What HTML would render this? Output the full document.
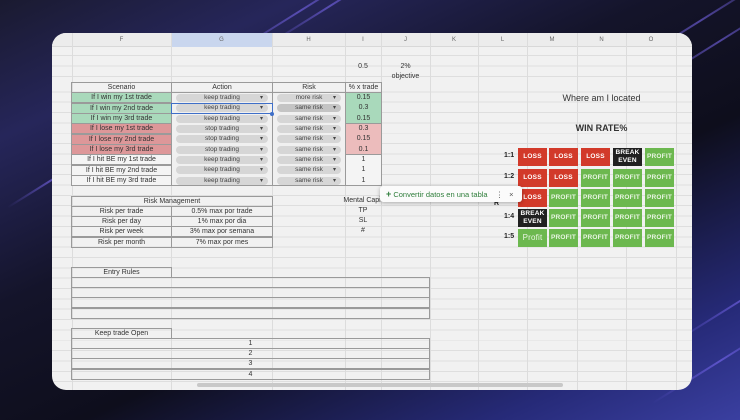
<!DOCTYPE html>
<html><head><meta charset="utf-8"><style>
*{margin:0;padding:0;box-sizing:border-box}
body{width:740px;height:420px;overflow:hidden;position:relative;font-family:"Liberation Sans",sans-serif;
background:linear-gradient(155deg,#1a1a30 0%,#26265a 18%,#14142a 40%,#0e0e1c 60%,#262a78 85%,#3a3fa0 100%);}
.st{position:absolute;background:linear-gradient(90deg,transparent,rgba(130,110,255,.55),transparent);height:2px;transform:rotate(-32deg)}
#scr{position:absolute;left:52px;top:33px;width:640px;height:357px;background:#f1f1f1;border-radius:14px;overflow:hidden;
background-image:repeating-linear-gradient(180deg,transparent 0,transparent 9.35px,#dedede 9.35px,#dedede 10.35px);background-position:0 49px}
.a{position:absolute}
.t{position:absolute;font-size:7px;color:#333;text-align:center;line-height:10px;white-space:nowrap}
.vl{position:absolute;top:0;width:1px;height:357px;background:#dcdcdc}
.hd{position:absolute;top:0;height:14px;font-size:6px;color:#666;text-align:center;line-height:14px}
.c{position:absolute;border:1px solid #9a9a9a;font-size:7px;color:#333;text-align:center;line-height:9px;white-space:nowrap;overflow:hidden}
.pill{position:absolute;height:8px;background:#d6d6d6;border-radius:4px;font-size:6.5px;color:#444;text-align:center;line-height:8px}
.pill:after{content:"▾";position:absolute;right:5px;top:0;font-size:6px}
.w{position:absolute;width:29px;height:18px;color:#fff;font-size:6.5px;text-align:center;line-height:18px;font-weight:bold;letter-spacing:.2px}
.L{background:#d23a2a}.P{background:#6cb84f;color:#e9f5e3}.B{background:#202020;line-height:8px;padding-top:1px}
.pc{position:absolute;top:137px;width:29px;font-size:7.5px;font-weight:bold;text-align:center;color:#222}
.rl{position:absolute;left:500px;font-size:7px;font-weight:bold;color:#222}
</style></head><body>
<div class="st" style="left:200px;top:10px;width:200px"></div>
<div class="st" style="left:250px;top:5px;width:160px"></div>
<div class="st" style="left:600px;top:20px;width:200px"></div>
<div class="st" style="left:620px;top:40px;width:200px"></div>
<div class="st" style="left:660px;top:300px;width:160px"></div>
<div class="st" style="left:640px;top:360px;width:160px"></div>
<div class="st" style="left:0px;top:180px;width:100px"></div>
<div id="scr">
<div class="a" style="left:0;top:0;width:640px;height:14px;background:#ececec;border-bottom:1px solid #d8d8d8"></div>
<div class="a" style="left:119px;top:0;width:101px;height:14px;background:#c9d6ee"></div>
<div class="vl" style="left:20px"></div><div class="vl" style="left:119px"></div><div class="vl" style="left:220px"></div><div class="vl" style="left:293px"></div><div class="vl" style="left:329px"></div><div class="vl" style="left:378px"></div><div class="vl" style="left:426px"></div><div class="vl" style="left:475px"></div><div class="vl" style="left:525px"></div><div class="vl" style="left:574px"></div><div class="vl" style="left:624px"></div>
<div class="hd" style="left:20px;width:99px">F</div><div class="hd" style="left:119px;width:101px">G</div><div class="hd" style="left:220px;width:73px">H</div><div class="hd" style="left:293px;width:36px">I</div><div class="hd" style="left:329px;width:49px">J</div><div class="hd" style="left:378px;width:48px">K</div><div class="hd" style="left:426px;width:49px">L</div><div class="hd" style="left:475px;width:50px">M</div><div class="hd" style="left:525px;width:49px">N</div><div class="hd" style="left:574px;width:50px">O</div>
<div class="t" style="left:293px;top:29px;width:36px">0.5</div>
<div class="t" style="left:329px;top:29px;width:49px">2%</div>
<div class="t" style="left:329px;top:39px;width:49px">objective</div>
<div class="c" style="left:19px;top:49px;width:101px;height:11px">Scenario</div>
<div class="c" style="left:119px;top:49px;width:102px;height:11px">Action</div>
<div class="c" style="left:220px;top:49px;width:74px;height:11px">Risk</div>
<div class="c" style="left:293px;top:49px;width:37px;height:11px">% x trade</div>
<div class="c" style="left:19px;top:59px;width:101px;height:11px;background:#a9d9bb">If I win my 1st trade</div>
<div class="c" style="left:19px;top:69.5px;width:101px;height:11px;background:#a9d9bb">If I win my 2nd trade</div>
<div class="c" style="left:19px;top:80px;width:101px;height:11px;background:#a9d9bb">If I win my 3rd trade</div>
<div class="c" style="left:19px;top:90px;width:101px;height:11px;background:#dd9799">If I lose my 1st trade</div>
<div class="c" style="left:19px;top:100.5px;width:101px;height:11px;background:#dd9799">If I lose my 2nd trade</div>
<div class="c" style="left:19px;top:111px;width:101px;height:11px;background:#dd9799">If I lose my 3rd trade</div>
<div class="c" style="left:19px;top:121px;width:101px;height:11px;background:#f4f4f4">If I hit BE my 1st trade</div>
<div class="c" style="left:19px;top:131.5px;width:101px;height:11px;background:#f4f4f4">If I hit BE my 2nd trade</div>
<div class="c" style="left:19px;top:142px;width:101px;height:11px;background:#f4f4f4">If I hit BE my 3rd trade</div>
<div class="c" style="left:119px;top:59px;width:102px;height:94px;background:#f0f0f0"></div>
<div class="c" style="left:220px;top:59px;width:74px;height:94px;background:#f0f0f0"></div>
<div class="c" style="left:293px;top:59px;width:37px;height:32px;background:#a9d9bb"></div>
<div class="c" style="left:293px;top:90px;width:37px;height:32px;background:#ecbcbc"></div>
<div class="c" style="left:293px;top:121px;width:37px;height:32px;background:#f4f4f4"></div>
<div class="a" style="left:119px;top:69.5px;width:102px;height:11px;border:1.5px solid #3f6fc8"></div>
<div class="a" style="left:218px;top:79px;width:4px;height:4px;border-radius:2px;background:#3f6fc8"></div>
<div class="pill" style="left:124px;top:60.5px;width:92px">keep trading</div>
<div class="pill" style="left:124px;top:71px;width:92px">keep trading</div>
<div class="pill" style="left:124px;top:81.5px;width:92px">keep trading</div>
<div class="pill" style="left:124px;top:91.5px;width:92px">stop trading</div>
<div class="pill" style="left:124px;top:102px;width:92px">stop trading</div>
<div class="pill" style="left:124px;top:112.5px;width:92px">stop trading</div>
<div class="pill" style="left:124px;top:122.5px;width:92px">keep trading</div>
<div class="pill" style="left:124px;top:133px;width:92px">keep trading</div>
<div class="pill" style="left:124px;top:143.5px;width:92px">keep trading</div>
<div class="pill" style="left:225px;top:60.5px;width:64px">more risk</div>
<div class="pill" style="left:225px;top:71px;width:64px;background:#c4c4c4">same risk</div>
<div class="pill" style="left:225px;top:81.5px;width:64px">same risk</div>
<div class="pill" style="left:225px;top:91.5px;width:64px">same risk</div>
<div class="pill" style="left:225px;top:102px;width:64px">same risk</div>
<div class="pill" style="left:225px;top:112.5px;width:64px">same risk</div>
<div class="pill" style="left:225px;top:122.5px;width:64px">same risk</div>
<div class="pill" style="left:225px;top:133px;width:64px">same risk</div>
<div class="pill" style="left:225px;top:143.5px;width:64px">same risk</div>
<div class="t" style="left:293px;top:59.5px;width:37px">0.15</div>
<div class="t" style="left:293px;top:70px;width:37px">0.3</div>
<div class="t" style="left:293px;top:80.5px;width:37px">0.15</div>
<div class="t" style="left:293px;top:90.5px;width:37px">0.3</div>
<div class="t" style="left:293px;top:101px;width:37px">0.15</div>
<div class="t" style="left:293px;top:111.5px;width:37px">0.1</div>
<div class="t" style="left:293px;top:121.5px;width:37px">1</div>
<div class="t" style="left:293px;top:132px;width:37px">1</div>
<div class="t" style="left:293px;top:142.5px;width:37px">1</div>
<div class="c" style="left:19px;top:163px;width:202px;height:11px">Risk Management</div>
<div class="c" style="left:19px;top:173px;width:101px;height:11px">Risk per trade</div><div class="c" style="left:119px;top:173px;width:102px;height:11px">0.5% max por trade</div>
<div class="c" style="left:19px;top:183px;width:101px;height:11px">Risk per day</div><div class="c" style="left:119px;top:183px;width:102px;height:11px">1% max por dia</div>
<div class="c" style="left:19px;top:193px;width:101px;height:11px">Risk per week</div><div class="c" style="left:119px;top:193px;width:102px;height:11px">3% max por semana</div>
<div class="c" style="left:19px;top:203.5px;width:101px;height:11px">Risk per month</div><div class="c" style="left:119px;top:203.5px;width:102px;height:11px">7% max por mes</div>
<div class="t" style="left:283px;top:163px;width:60px">Mental Capita</div>
<div class="t" style="left:293px;top:173px;width:36px">TP</div>
<div class="t" style="left:293px;top:183px;width:36px">SL</div>
<div class="t" style="left:293px;top:193px;width:36px">#</div>
<div class="c" style="left:19px;top:234px;width:101px;height:11px">Entry Rules</div>
<div class="c" style="left:19px;top:244px;width:359px;height:11px"></div>
<div class="c" style="left:19px;top:254px;width:359px;height:11px"></div>
<div class="c" style="left:19px;top:264px;width:359px;height:11px"></div>
<div class="c" style="left:19px;top:274.5px;width:359px;height:11px"></div>
<div class="c" style="left:19px;top:295px;width:101px;height:11px">Keep trade Open</div>
<div class="c" style="left:19px;top:305px;width:359px;height:11px">1</div>
<div class="c" style="left:19px;top:315px;width:359px;height:11px">2</div>
<div class="c" style="left:19px;top:325px;width:359px;height:11px">3</div>
<div class="c" style="left:19px;top:335.5px;width:359px;height:11px">4</div>
<div class="a" style="left:145px;top:350px;width:366px;height:4px;border-radius:2px;background:#c8c8c8"></div>
<div class="t" style="left:475px;top:60px;width:149px;font-size:9px;color:#333">Where am I located</div>
<div class="t" style="left:475px;top:90px;width:149px;font-size:9px;font-weight:bold;color:#333">WIN RATE%</div>
<div class="pc" style="left:466px">20%</div><div class="pc" style="left:497px">30%</div><div class="pc" style="left:529px">40%</div><div class="pc" style="left:561px">50%</div><div class="pc" style="left:593px">60%</div>
<div class="rl" style="left:452px;top:119px">1:1</div><div class="rl" style="left:452px;top:140px">1:2</div><div class="rl" style="left:452px;top:180px">1:4</div><div class="rl" style="left:452px;top:200px">1:5</div>
<div class="w L" style="left:466px;top:115px">LOSS</div><div class="w L" style="left:497px;top:115px">LOSS</div><div class="w L" style="left:529px;top:115px">LOSS</div><div class="w B" style="left:561px;top:115px">BREAK<br>EVEN</div><div class="w P" style="left:593px;top:115px">PROFIT</div>
<div class="w L" style="left:466px;top:136px">LOSS</div><div class="w L" style="left:497px;top:136px">LOSS</div><div class="w P" style="left:529px;top:136px">PROFIT</div><div class="w P" style="left:561px;top:136px">PROFIT</div><div class="w P" style="left:593px;top:136px">PROFIT</div>
<div class="w L" style="left:466px;top:156px">LOSS</div><div class="w P" style="left:497px;top:156px">PROFIT</div><div class="w P" style="left:529px;top:156px">PROFIT</div><div class="w P" style="left:561px;top:156px">PROFIT</div><div class="w P" style="left:593px;top:156px">PROFIT</div>
<div class="w B" style="left:466px;top:176px">BREAK<br>EVEN</div><div class="w P" style="left:497px;top:176px">PROFIT</div><div class="w P" style="left:529px;top:176px">PROFIT</div><div class="w P" style="left:561px;top:176px">PROFIT</div><div class="w P" style="left:593px;top:176px">PROFIT</div>
<div class="w P" style="left:466px;top:196px;font-size:8px;font-weight:normal">Profit</div><div class="w P" style="left:497px;top:196px">PROFIT</div><div class="w P" style="left:529px;top:196px">PROFIT</div><div class="w P" style="left:561px;top:196px">PROFIT</div><div class="w P" style="left:593px;top:196px">PROFIT</div>
<div class="rl" style="left:442px;top:167px;font-size:7px">R</div>
<div class="a" style="left:328px;top:153px;width:142px;height:16px;background:#fbfbfb;border-radius:3px;box-shadow:0 1px 4px rgba(0,0,0,.3);font-size:7.5px;color:#2e7d3a;line-height:16px;padding-left:6px;white-space:nowrap">
<b style="font-size:9px">+</b> Convertir datos en una tabla <span style="color:#555;margin-left:6px">⋮</span><span style="color:#555;margin-left:6px">×</span></div>
</div>
</body></html>
